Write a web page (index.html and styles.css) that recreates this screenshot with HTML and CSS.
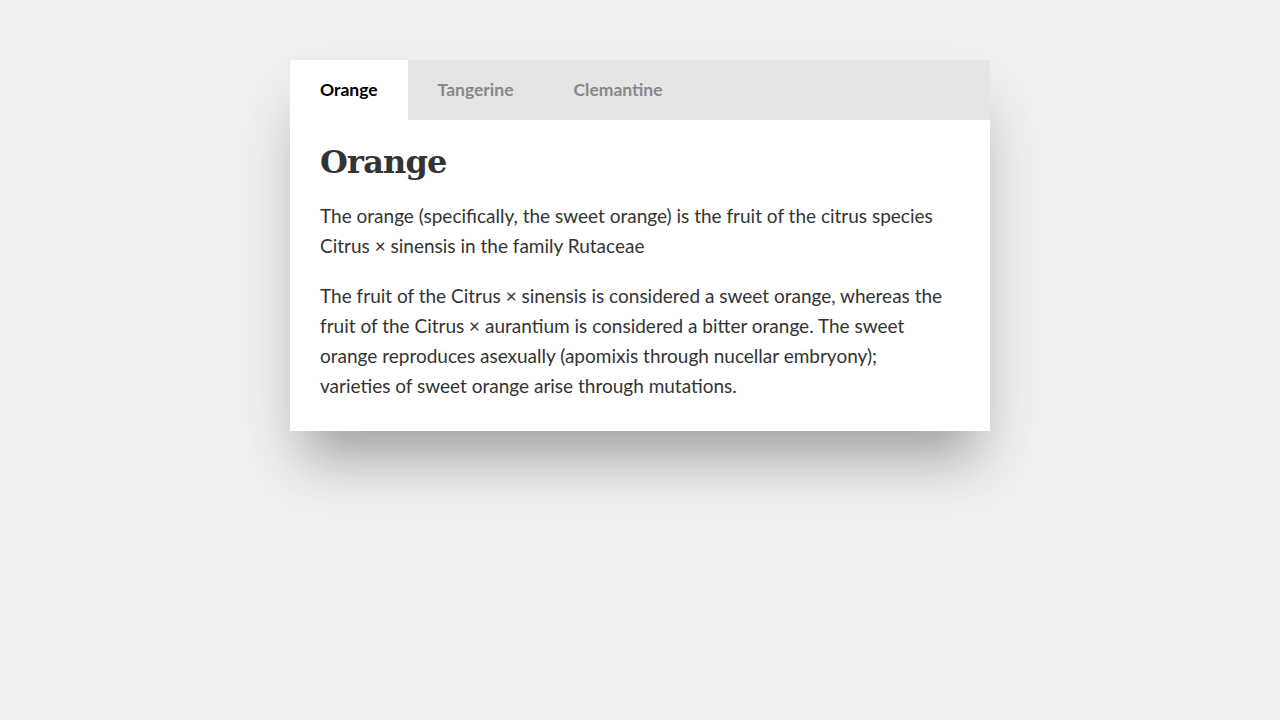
FILE: index.html
```
<!DOCTYPE html>
<html>
<head>
<meta charset="utf-8">
<link rel="stylesheet" href="styles.css">
</head>
<body>
<div class="page">
<div class="card">
  <div class="tabs">
    <div class="tab active">Orange</div>
    <div class="tab">Tangerine</div>
    <div class="tab">Clemantine</div>
  </div>
  <div class="content">
    <h1 class="title">Orange</h1>
    <p class="para">The orange (specifically, the sweet orange) is the fruit of the citrus species Citrus × sinensis in the family Rutaceae</p>
    <p class="para">The fruit of the Citrus × sinensis is considered a sweet orange, whereas the fruit of the Citrus × aurantium is considered a bitter orange. The sweet orange reproduces asexually (apomixis through nucellar embryony); varieties of sweet orange arise through mutations.</p>
  </div>
</div>
</div>
</body>
</html>
```
FILE: styles.css
```
html, body {
  margin: 0;
  padding: 0;
  background: #efefef;
}
body {
  font-family: Lato, "Noto Sans", sans-serif;
}
.page {
  box-sizing: border-box;
  min-height: 720px;
  padding-top: 60px;
}
.card {
  width: 700px;
  margin: 0 auto;
  background: #fff;
  box-shadow: 0 40px 50px -15px rgba(0,0,0,0.3), 0 30px 70px rgba(0,0,0,0.035);
}
.tabs {
  display: flex;
  background: #e5e5e5;
  height: 60px;
}
.tab {
  padding: 0 30px;
  line-height: 60px;
  font-weight: 700;
  font-size: 17.5px;
  color: #888;
}
.tab.active {
  background: #fff;
  color: #000;
}
.content {
  padding: 19px 40px 30px 30px;
}
.title {
  margin: 0 0 16px;
  font-family: "DejaVu Serif", serif;
  font-weight: 700;
  font-size: 32px;
  letter-spacing: -0.8px;
  line-height: 46px;
  color: #333;
}
.para {
  margin: 0 0 20px;
  font-size: 19px;
  line-height: 30px;
  color: #333;
}
.para:last-child {
  margin-bottom: 0;
}
```
